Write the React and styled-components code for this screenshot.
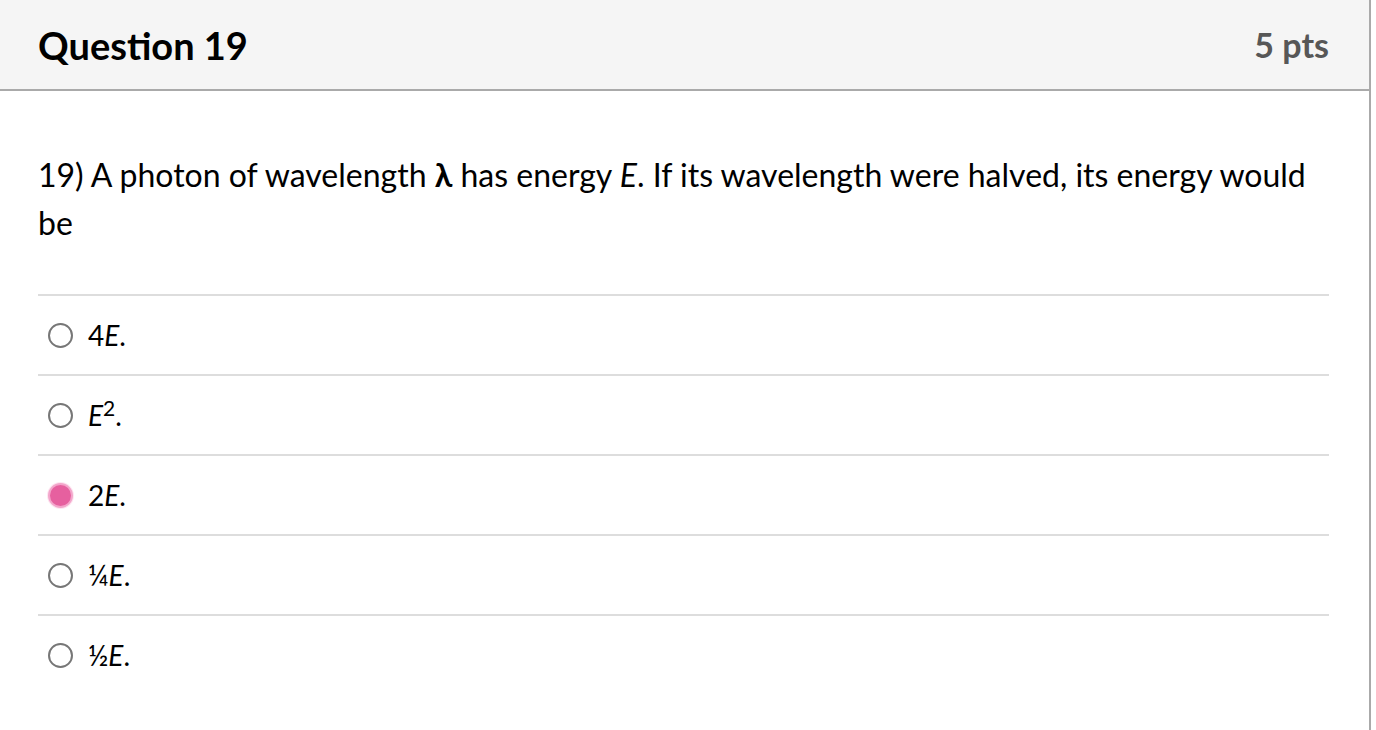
import React from 'react';
import styled, { createGlobalStyle } from 'styled-components';

const GlobalStyle = createGlobalStyle`
  body {
    margin: 0;
    background: #fff;
    font-family: Lato, "Noto Sans", "Liberation Sans", sans-serif;
    color: #000;
  }
`;

const Panel = styled.div`
  width: 1369px;
  min-height: 730px;
  border-right: 2px solid #aaaaaa;
  box-sizing: content-box;
`;

const Header = styled.div`
  height: 89px;
  background: #f5f5f5;
  border-bottom: 2px solid #aaaaaa;
  display: flex;
  align-items: center;
  justify-content: space-between;
  padding: 0 40px 0 38px;
`;

const Title = styled.h2`
  margin: 0;
  font-size: 38px;
  font-weight: 700;
  color: #000;
`;

const Points = styled.div`
  font-size: 34px;
  font-weight: 700;
  color: #575757;
`;

const Body = styled.div`
  padding: 60px 40px 0 38px;
`;

const Question = styled.p`
  margin: 0 0 47px;
  font-size: 32px;
  line-height: 48px;
`;

const Answer = styled.label`
  display: flex;
  align-items: center;
  height: 78px;
  border-top: 2px solid #dddddd;
  font-size: 28px;
`;

const Radio = styled.span`
  width: 25px;
  height: 25px;
  margin-left: 10px;
  margin-right: 15px;
  border-radius: 50%;
  box-sizing: border-box;
  flex: none;
  border: ${p => (p.$checked ? '2px solid #f3a6cb' : '2px solid #777777')};
  background: ${p => (p.$checked ? '#e6609f' : '#fff')};
  box-shadow: ${p => (p.$checked ? '0 0 0 1px #fde6f1' : 'none')};
`;

const Sup = styled.sup`
  font-size: 0.75em;
  line-height: 0;
`;

const answers = [
  { id: 1, label: <>4<i>E</i>.</> },
  { id: 2, label: <><i>E</i><Sup>2</Sup>.</> },
  { id: 3, label: <>2<i>E</i>.</>, checked: true },
  { id: 4, label: <>¼<i>E</i>.</> },
  { id: 5, label: <>½<i>E</i>.</> },
];

export default function App() {
  return (
    <>
      <GlobalStyle />
      <Panel>
        <Header>
          <Title>Question 19</Title>
          <Points>5 pts</Points>
        </Header>
        <Body>
          <Question>
            19) A photon of wavelength <b>λ</b> has energy <i>E</i>. If its wavelength were halved, its energy would be
          </Question>
          {answers.map(a => (
            <Answer key={a.id}>
              <Radio $checked={a.checked} />
              <span>{a.label}</span>
            </Answer>
          ))}
        </Body>
      </Panel>
    </>
  );
}
